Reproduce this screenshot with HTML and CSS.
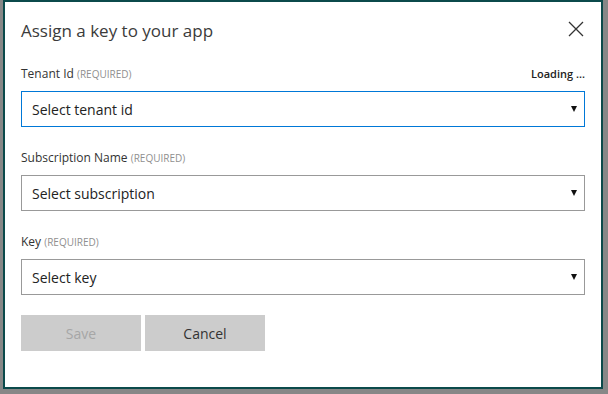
FILE: index.html
```html
<!DOCTYPE html>
<html lang="en">

<head>
    <meta charset="UTF-8">
    <meta name="viewport" content="width=device-width, initial-scale=1.0">
    <title>Assign a key</title>
    <link rel="stylesheet" href="styles.css">
</head>

<body>
    <div class="dialog">
        <div class="dialog-header">
            <h2 class="dialog-title">Assign a key to your app</h2>
            <span class="dialog-close">
                <svg width="16" height="16" viewBox="0 0 16 16">
                    <path d="M1 1 L15 15 M15 1 L1 15" stroke="#333" stroke-width="1.3" fill="none" />
                </svg>
            </span>
        </div>

        <div class="field">
            <div class="field-label">
                <span>Tenant Id <small>(REQUIRED)</small></span>
                <span class="field-status">Loading ...</span>
            </div>
            <div class="select focused">
                <span>Select tenant id</span>
                <span class="select-arrow"></span>
            </div>
        </div>

        <div class="field">
            <div class="field-label">
                <span>Subscription Name <small>(REQUIRED)</small></span>
            </div>
            <div class="select">
                <span>Select subscription</span>
                <span class="select-arrow"></span>
            </div>
        </div>

        <div class="field">
            <div class="field-label">
                <span>Key <small>(REQUIRED)</small></span>
            </div>
            <div class="select">
                <span>Select key</span>
                <span class="select-arrow"></span>
            </div>
        </div>

        <div class="actions">
            <button class="btn" disabled>Save</button>
            <button class="btn">Cancel</button>
        </div>
    </div>
</body>

</html>
```

FILE: styles.css
```css
body {
    margin: 0;
    background: #878787;
    font-family: "Open Sans", "Noto Sans", sans-serif;
}

.dialog {
    width: 564px;
    height: 385px;
    margin-left: 3px;
    padding: 0 16px;
    background: #fff;
    border: 2px solid #0b4a4b;
}

.dialog-header {
    display: flex;
    justify-content: space-between;
    align-items: center;
    height: 56px;
    margin-bottom: 5px;
}

.dialog-title {
    margin: 0;
    font-size: 17px;
    font-weight: 400;
    color: #3b3b3b;
}

.dialog-close {
    display: flex;
    margin-right: 1px;
    margin-top: -3px;
}

.field {
    margin-bottom: 20px;
}

.field-label {
    display: flex;
    justify-content: space-between;
    align-items: center;
    height: 20px;
    margin-bottom: 8px;
    font-size: 12px;
    color: #333;
}

.field-label small {
    font-size: 10px;
    color: #8f8f8f;
}

.field-status {
    font-size: 11px;
    font-weight: 600;
    color: #222;
}

.select {
    display: flex;
    justify-content: space-between;
    align-items: center;
    height: 36px;
    box-sizing: border-box;
    border: 1px solid #999;
    padding: 0 7px 0 10px;
    font-size: 14px;
    color: #222;
}

.select.focused {
    border-color: #0078d7;
}

.select-arrow {
    width: 0;
    height: 0;
    border-left: 3.5px solid transparent;
    border-right: 3.5px solid transparent;
    border-top: 6px solid #111;
}

.actions {
    display: flex;
    gap: 4px;
}

.btn {
    width: 120px;
    height: 36px;
    border: none;
    background: #cccccc;
    font-family: inherit;
    font-size: 14px;
    color: #333;
}

.btn:disabled {
    color: #a6a6a6;
}
```
